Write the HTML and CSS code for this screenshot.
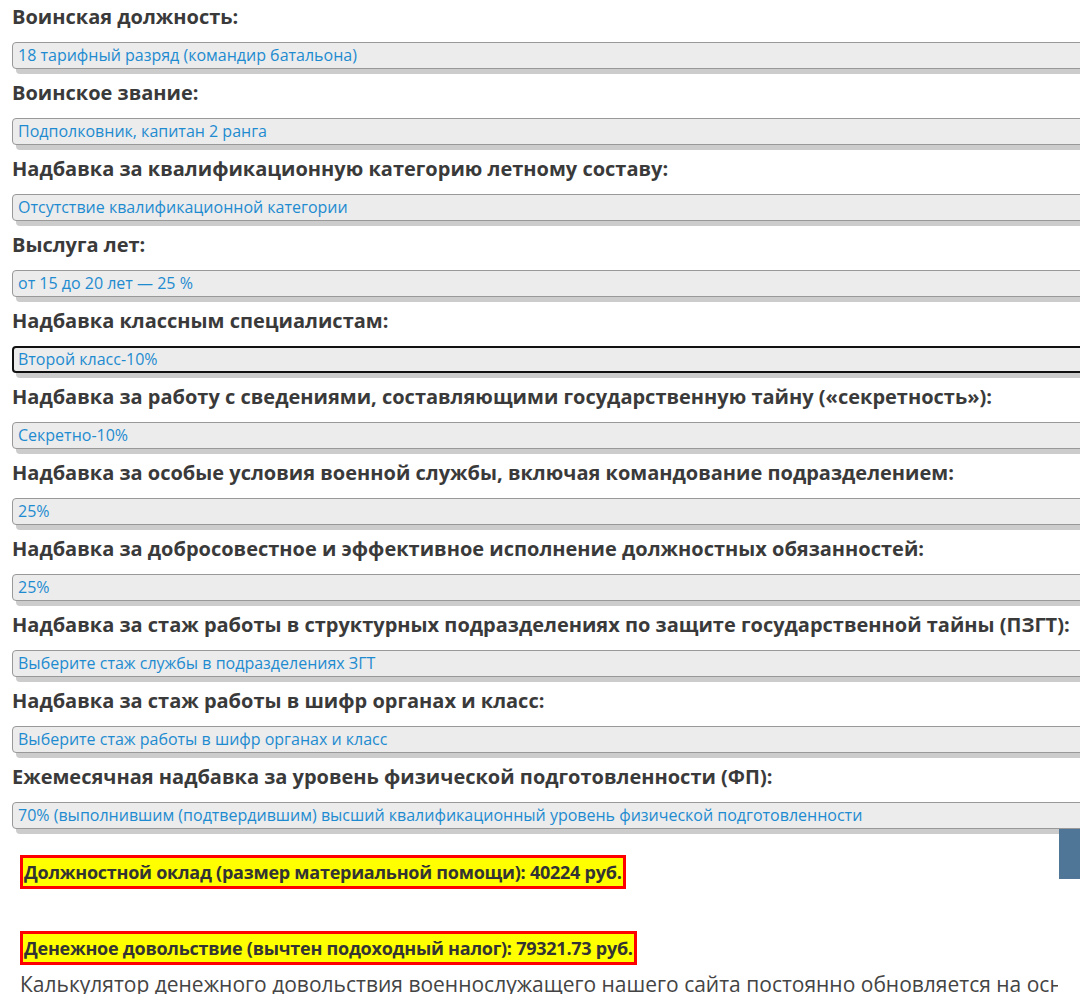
FILE: index.html
```html
<!DOCTYPE html>
<html lang="ru">
<head>
<meta charset="utf-8">
<link rel="stylesheet" href="styles.css">
</head>
<body>
<div class="calc">
  <div class="field"><div class="label">Воинская должность:</div><div class="select">18 тарифный разряд (командир батальона)</div></div>
  <div class="field"><div class="label">Воинское звание:</div><div class="select">Подполковник, капитан 2 ранга</div></div>
  <div class="field"><div class="label">Надбавка за квалификационную категорию летному составу:</div><div class="select">Отсутствие квалификационной категории</div></div>
  <div class="field"><div class="label">Выслуга лет:</div><div class="select">от 15 до 20 лет — 25 %</div></div>
  <div class="field"><div class="label">Надбавка классным специалистам:</div><div class="select focused">Второй класс-10%</div></div>
  <div class="field"><div class="label">Надбавка за работу с сведениями, составляющими государственную тайну («секретность»):</div><div class="select">Секретно-10%</div></div>
  <div class="field"><div class="label">Надбавка за особые условия военной службы, включая командование подразделением:</div><div class="select">25%</div></div>
  <div class="field"><div class="label">Надбавка за добросовестное и эффективное исполнение должностных обязанностей:</div><div class="select">25%</div></div>
  <div class="field"><div class="label">Надбавка за стаж работы в структурных подразделениях по защите государственной тайны (ПЗГТ):</div><div class="select">Выберите стаж службы в подразделениях ЗГТ</div></div>
  <div class="field"><div class="label">Надбавка за стаж работы в шифр органах и класс:</div><div class="select">Выберите стаж работы в шифр органах и класс</div></div>
  <div class="field"><div class="label">Ежемесячная надбавка за уровень физической подготовленности (ФП):</div><div class="select">70% (выполнившим (подтвердившим) высший квалификационный уровень физической подготовленности</div></div>
</div>
<div class="results">
  <div class="result first"><span>Должностной оклад (размер материальной помощи): 40224 руб.</span></div>
  <div class="result second"><span>Денежное довольствие (вычтен подоходный налог): 79321.73 руб.</span></div>
  <p class="text">Калькулятор денежного довольствия военнослужащего нашего сайта постоянно обновляется на основе действующего законодательства</p>
</div>
<div class="totop"></div>
</body>
</html>
```
FILE: styles.css
```css
html, body {
  margin: 0;
  padding: 0;
  background: #fff;
  overflow: hidden;
}
body {
  width: 1080px;
  height: 994px;
  font-family: "Open Sans", "Noto Sans", sans-serif;
  position: relative;
}
.calc {
  padding: 4px 0 0 12px;
}
.field {
  margin-bottom: 11px;
}
.label {
  font-weight: 700;
  font-size: 20px;
  line-height: 26px;
  color: #3a3a3a;
  white-space: nowrap;
  margin-bottom: 12px;
}
.select {
  width: 1100px;
  height: 25px;
  box-sizing: content-box;
  border: 1px solid #999;
  border-radius: 4px;
  background: #ececec;
  box-shadow: 4px 5px 0 #cccccc;
  color: #1e8bd0;
  font-size: 16px;
  line-height: 25px;
  padding-left: 5px;
  white-space: nowrap;
}
.select.focused {
  border: 2px solid #111;
  height: 23px;
  line-height: 23px;
  padding-left: 4px;
}
.results {
  padding-left: 20px;
  padding-top: 15px;
  width: 1038px;
  overflow: hidden;
}
.result {
  display: flex;
  margin-bottom: 42px;
}
.result.second {
  margin-bottom: 0;
}
.result span {
  display: block;
  border: 3px solid #ff0000;
  background: #ffff00;
  color: #333;
  font-family: "Open Sans", sans-serif;
  font-weight: 700;
  font-size: 18px;
  letter-spacing: -0.25px;
  line-height: 28px;
  padding: 0 1px 0 1px;
  white-space: nowrap;
}
.text {
  margin: 6px 0 0 0;
  font-size: 21px;
  line-height: 26px;
  color: #444;
  white-space: nowrap;
}
.totop {
  position: absolute;
  left: 1059px;
  top: 829px;
  width: 21px;
  height: 50px;
  background: #4f7696;
}
```
